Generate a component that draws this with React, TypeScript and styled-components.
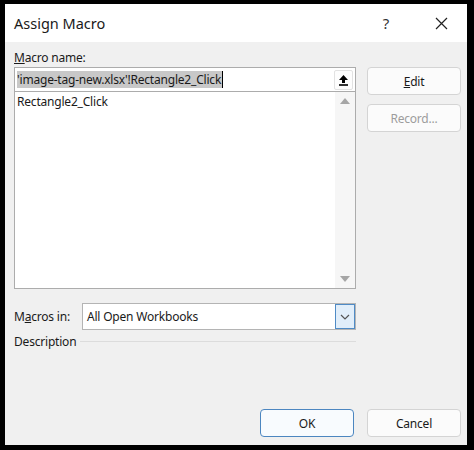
import React from "react";
import styled, { createGlobalStyle } from "styled-components";

const GlobalStyle = createGlobalStyle`
  html, body {
    margin: 0;
    padding: 0;
    background: #000;
  }
  body {
    font-family: "Noto Sans", "Open Sans", sans-serif;
    font-size: 12px;
    letter-spacing: -0.2px;
    color: #1a1a1a;
  }
`;

const Page = styled.div`
  width: 474px;
  height: 450px;
  box-sizing: border-box;
  padding: 4px 7px 5px 5px;
  background: #000;
`;

const Dialog = styled.div`
  width: 462px;
  height: 441px;
  background: #f0f0f0;
  display: flex;
  flex-direction: column;
`;

const TitleBar = styled.div`
  height: 38px;
  background: #fff;
  display: flex;
  align-items: center;
  padding-left: 9px;
`;

const Title = styled.div`
  flex: 1;
  font-size: 14.5px;
  letter-spacing: 0;
  color: #1a1a1a;
`;

const TitleIcon = styled.div<{ w: number }>`
  width: ${p => p.w}px;
  height: 38px;
  display: flex;
  align-items: center;
  justify-content: center;
  font-size: 15px;
  color: #333;
`;

const Body = styled.div`
  flex: 1;
  display: flex;
  flex-direction: column;
  padding: 8px 6px 4px 9px;
`;

const Label = styled.div`
  height: 16px;
  line-height: 16px;
  margin-bottom: 1px;
`;

const MainRow = styled.div`
  display: flex;
  gap: 11px;
`;

const LeftCol = styled.div`
  width: 342px;
  display: flex;
  flex-direction: column;
`;

const RightCol = styled.div`
  width: 94px;
  display: flex;
  flex-direction: column;
  gap: 9px;
`;

const InputBox = styled.div`
  height: 24px;
  box-sizing: border-box;
  border: 1px solid #acacac;
  border-bottom: none;
  background: #fff;
  display: flex;
  align-items: center;
  padding-left: 2px;
`;

const Selected = styled.span`
  background: #c8c8c8;
  line-height: 17px;
  padding-right: 1px;
  border-right: 1px solid #000;
`;

const InputText = styled.div`
  flex: 1;
`;

const CollapseBtn = styled.div`
  width: 19px;
  height: 20px;
  margin-right: 2px;
  box-sizing: border-box;
  border: 1px solid #e2e2e2;
  border-radius: 2px;
  background: #fdfdfd;
  display: flex;
  align-items: center;
  justify-content: center;
`;

const ListBox = styled.div`
  height: 198px;
  box-sizing: border-box;
  border: 1px solid #acacac;
  background: #fff;
  display: flex;
`;

const ListItems = styled.div`
  flex: 1;
  padding: 2px 2px;
`;

const ListItem = styled.div`
  line-height: 16px;
`;

const ScrollBar = styled.div`
  width: 20px;
  background: #f6f6f6;
  display: flex;
  flex-direction: column;
  justify-content: space-between;
  align-items: center;
  padding: 6px 0 6px;
`;

const Arrow = styled.div<{ down?: boolean }>`
  width: 0;
  height: 0;
  border-left: 5px solid transparent;
  border-right: 5px solid transparent;
  ${p =>
    p.down
      ? "border-top: 6px solid #a6a6a6;"
      : "border-bottom: 6px solid #a6a6a6;"}
`;

const Button = styled.button<{ primary?: boolean; disabled?: boolean }>`
  width: 94px;
  height: 28px;
  box-sizing: border-box;
  border-radius: 4px;
  border: 1px solid ${p => (p.primary ? "#4c86c0" : "#d4d4d4")};
  background: ${p => (p.primary ? "#f8fbfe" : "#fbfbfb")};
  font-family: inherit;
  font-size: 12px;
  letter-spacing: -0.2px;
  color: ${p => (p.disabled ? "#9d9d9d" : "#1a1a1a")};
  padding: 0;
`;

const SelectRow = styled.div`
  display: flex;
  align-items: center;
  margin-top: 14px;
`;

const SelectLabel = styled.div`
  width: 68px;
`;

const Select = styled.div`
  width: 274px;
  height: 27px;
  box-sizing: border-box;
  border: 1px solid #b4b4b4;
  background: #fff;
  display: flex;
  align-items: center;
  padding-left: 4px;
`;

const SelectText = styled.div`
  flex: 1;
`;

const DropBtn = styled.div`
  width: 20px;
  height: 25px;
  box-sizing: border-box;
  border: 1px solid #4f8bc6;
  background: #e1eefa;
  display: flex;
  align-items: center;
  justify-content: center;
`;

const DescRow = styled.div`
  display: flex;
  align-items: center;
  width: 342px;
  margin-top: 3px;
  gap: 4px;
`;

const Rule = styled.div`
  flex: 1;
  height: 1px;
  background: #dcdcdc;
`;

const Footer = styled.div`
  margin-top: auto;
  display: flex;
  justify-content: flex-end;
  gap: 13px;
  padding-bottom: 4px;
`;

export default function App() {
  return (
    <Page>
      <GlobalStyle />
      <Dialog>
        <TitleBar>
          <Title>Assign Macro</Title>
          <TitleIcon w={58}>?</TitleIcon>
          <TitleIcon w={52}>
            <svg width="13" height="13" viewBox="0 0 13 13">
              <path d="M1 1 L12 12 M12 1 L1 12" stroke="#222" strokeWidth="1.2" />
            </svg>
          </TitleIcon>
        </TitleBar>
        <Body>
          <Label>
            <u>M</u>acro name:
          </Label>
          <MainRow>
            <LeftCol>
              <InputBox>
                <InputText>
                  <Selected>'image-tag-new.xlsx'!Rectangle2_Click</Selected>
                </InputText>
                <CollapseBtn>
                  <svg width="11" height="12" viewBox="0 0 11 12">
                    <path d="M5.5 1 L10 6 H7 V9 H4 V6 H1 Z" fill="#000" />
                    <rect x="1" y="10.2" width="9" height="1.6" fill="#000" />
                  </svg>
                </CollapseBtn>
              </InputBox>
              <ListBox>
                <ListItems>
                  <ListItem>Rectangle2_Click</ListItem>
                </ListItems>
                <ScrollBar>
                  <Arrow />
                  <Arrow down />
                </ScrollBar>
              </ListBox>
            </LeftCol>
            <RightCol>
              <Button>
                <u>E</u>dit
              </Button>
              <Button disabled>Record...</Button>
            </RightCol>
          </MainRow>
          <SelectRow>
            <SelectLabel>
              M<u>a</u>cros in:
            </SelectLabel>
            <Select>
              <SelectText>All Open Workbooks</SelectText>
              <DropBtn>
                <svg width="10" height="6" viewBox="0 0 10 6">
                  <path d="M1 1 L5 5 L9 1" stroke="#555" strokeWidth="1.2" fill="none" />
                </svg>
              </DropBtn>
            </Select>
          </SelectRow>
          <DescRow>
            <span>Description</span>
            <Rule />
          </DescRow>
          <Footer>
            <Button primary>OK</Button>
            <Button>Cancel</Button>
          </Footer>
        </Body>
      </Dialog>
    </Page>
  );
}
